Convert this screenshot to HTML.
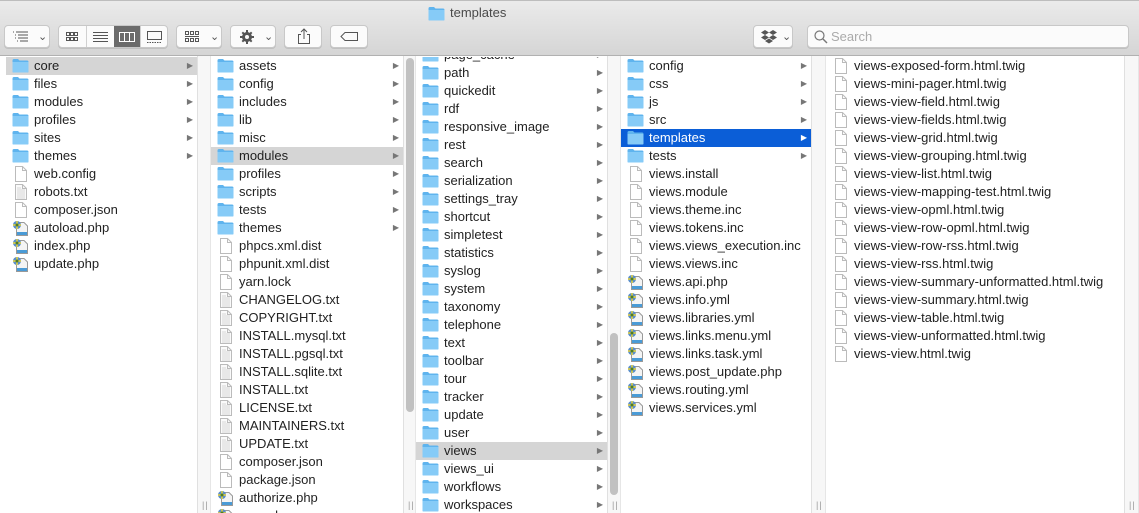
<!DOCTYPE html>
<html><head><meta charset="utf-8">
<style>
*{margin:0;padding:0;box-sizing:border-box}
body{width:1139px;height:513px;overflow:hidden;background:#fff;font-family:"Liberation Sans",Arial,sans-serif;font-size:13px;color:#222;position:relative}
#tb{position:absolute;left:0;top:0;width:1139px;height:56px;background:linear-gradient(#ebebeb,#d5d5d5);border-bottom:1px solid #b1b1b1}
#tb .topline{position:absolute;left:0;top:0;width:1139px;height:1px;background:#bdbdbd}
.title{position:absolute;left:430px;top:5px;font-size:13px;color:#4a4a4a}
.btn{position:absolute;top:25px;height:23px;background:#fbfbfb;border:1px solid #c8c8c8;border-radius:4px;box-shadow:0 1px 0 #c0c0c0}
.chev{position:absolute;top:4px;font-size:11px;color:#555}
.col{position:absolute;top:57px;bottom:0;overflow:hidden}
.row{position:absolute;left:0;right:0;height:18px;line-height:18px;white-space:nowrap}
.row svg{position:absolute;left:6px;top:1px}
.row span{position:absolute;left:28px;top:0}
.row i{position:absolute;right:4px;top:0;font-style:normal;font-size:8px;color:#777}
.sel{background:#d5d5d5}
.blue{background:#0b5ed7;color:#fff}
.blue i{color:#fff}
.strip{position:absolute;top:56px;bottom:0;background:#f7f7f7;border-left:1px solid #e0e0e0;border-right:1px solid #e6e6e6}
.grip{position:absolute;bottom:3px;left:4px;font-size:9px;color:#999;letter-spacing:1px}
.thumb{position:absolute;width:8px;background:#c1c1c1;border-radius:4px}
</style></head><body>
<svg width="0" height="0" style="position:absolute">
<defs>
<symbol id="fo" viewBox="0 0 17 15"><path d="M0.5 2.5 Q0.5 1 2 1 L6 1 L7.5 2.5 L15 2.5 Q16.5 2.5 16.5 4 L16.5 13.5 Q16.5 14.5 15.5 14.5 L1.5 14.5 Q0.5 14.5 0.5 13.5Z" fill="#5fb4ee"/><path d="M0.5 4 L16.5 4 L16.5 13.5 Q16.5 14.5 15.5 14.5 L1.5 14.5 Q0.5 14.5 0.5 13.5Z" fill="#86cbf7"/></symbol>
<symbol id="fi" viewBox="0 0 17 16"><path d="M3.5 0.5 L10.5 0.5 L14.5 4.5 L14.5 15.5 L3.5 15.5Z" fill="#fff" stroke="#bbb"/><path d="M10.5 0.5 L10.5 4.5 L14.5 4.5" fill="none" stroke="#bbb"/></symbol>
<symbol id="tx" viewBox="0 0 17 16"><path d="M3.5 0.5 L10.5 0.5 L14.5 4.5 L14.5 15.5 L3.5 15.5Z" fill="#fafafa" stroke="#bbb"/><path d="M10.5 0.5 L10.5 4.5 L14.5 4.5" fill="none" stroke="#bbb"/><path d="M5 4h4M5 6h8M5 8h8M5 10h8M5 12h8M5 14h8" stroke="#d5d5d5" stroke-width="1"/></symbol>
<symbol id="ph" viewBox="0 0 17 16"><path d="M4.5 2.5 L12 2.5 L15.5 6 L15.5 15.5 L4.5 15.5Z" fill="#f4f4f4" stroke="#999"/><rect x="5" y="12" width="10" height="3" fill="#4a9bd6"/><circle cx="5" cy="5" r="4" fill="#5a8ec9"/><path d="M5 1v8M1 5h8" stroke="#e8d23a" stroke-width="1.5"/><circle cx="5" cy="5" r="1.5" fill="#4a7a2a"/></symbol>
</defs></svg>

<div id="tb"><div class="topline"></div>
<div class="title"><svg width="17" height="15" style="position:absolute;left:-2px;top:1px"><use href="#fo"/></svg><span style="position:absolute;left:20px;top:0">templates</span></div>
<div class="btn" style="left:4px;width:46px"><svg width="20" height="14" style="position:absolute;left:8px;top:4px"><path d="M3 2h12M5 5h10M5 8h10M7 11h8" stroke="#555" stroke-width="1"/><path d="M0 2h1M2 5h1M2 8h1M4 11h1" stroke="#555"/></svg><span class="chev" style="left:33px">&#8964;</span></div>
<div class="btn" style="left:58px;width:110px;overflow:hidden">
<svg width="110" height="23" style="position:absolute;left:-1px;top:-1px">
<rect x="56" y="0" width="26" height="23" fill="#6b6b6b"/>
<path d="M28.5 0v23M82.5 0v23" stroke="#d0d0d0"/>
<g fill="none" stroke="#555"><rect x="8.5" y="7.5" width="3" height="3"/><rect x="12.5" y="7.5" width="3" height="3"/><rect x="16.5" y="7.5" width="3" height="3"/><rect x="8.5" y="12.5" width="3" height="3"/><rect x="12.5" y="12.5" width="3" height="3"/><rect x="16.5" y="12.5" width="3" height="3"/>
<path d="M35 7.5h15M35 10.5h15M35 13.5h15M35 16.5h15"/></g>
<g fill="none" stroke="#fff"><rect x="61.5" y="7.5" width="15" height="9"/><path d="M66.5 7.5v9M71.5 7.5v9"/></g>
<g fill="none" stroke="#555"><rect x="89.5" y="6.5" width="14" height="8"/><path d="M89 17.5h15" stroke-dasharray="1.5 1"/></g>
</svg></div>
<div class="btn" style="left:176px;width:46px"><svg width="20" height="14" style="position:absolute;left:8px;top:4px"><g fill="none" stroke="#555"><rect x="0.5" y="1.5" width="3" height="3"/><rect x="5.5" y="1.5" width="3" height="3"/><rect x="10.5" y="1.5" width="3" height="3"/><rect x="0.5" y="8.5" width="3" height="3"/><rect x="5.5" y="8.5" width="3" height="3"/><rect x="10.5" y="8.5" width="3" height="3"/><path d="M0 6.5h14"/></g></svg><span class="chev" style="left:33px">&#8964;</span></div>
<div class="btn" style="left:230px;width:46px"><svg width="16" height="16" style="position:absolute;left:8px;top:3px"><g fill="#555"><circle cx="8" cy="8" r="5"/><path d="M7 1h2v3H7zM7 12h2v3H7zM1 7h3v2H1zM12 7h3v2h-3zM2.6 4l1.4-1.4 2 2-1.4 1.4zM10 11.4l1.4-1.4 2 2-1.4 1.4zM2.6 12l2-2 1.4 1.4-2 2zM10 4.6l2-2 1.4 1.4-2 2z"/></g><circle cx="8" cy="8" r="2" fill="#fbfbfb"/></svg><span class="chev" style="left:33px">&#8964;</span></div>
<div class="btn" style="left:284px;width:38px"><svg width="14" height="17" style="position:absolute;left:12px;top:2px"><path d="M4 6.5H1.5v9h11v-9H10M7 11V1M4 4l3-3 3 3" fill="none" stroke="#555"/></svg></div>
<div class="btn" style="left:330px;width:38px"><svg width="20" height="12" style="position:absolute;left:9px;top:5px"><path d="M5 1.5h12.5v8H5L1 5.5z" fill="none" stroke="#555"/></svg></div>
<div class="btn" style="left:753px;width:40px"><svg width="16" height="14" style="position:absolute;left:7px;top:4px"><g fill="#555"><path d="M4 0l4 2.5-4 2.5-4-2.5zM12 0l4 2.5-4 2.5-4-2.5zM4 5l4 2.5-4 2.5-4-2.5zM12 5l4 2.5-4 2.5-4-2.5zM8 8.5l4 2.5-4 2.5-4-2.5z"/></g></svg><span class="chev" style="left:28px">&#8964;</span></div>
<div class="btn" style="left:807px;width:322px"><svg width="14" height="14" style="position:absolute;left:6px;top:4px"><circle cx="5.5" cy="5.5" r="4.5" fill="none" stroke="#777" stroke-width="1.2"/><path d="M9 9l4 4" stroke="#777" stroke-width="1.4"/></svg><span style="position:absolute;left:23px;top:3px;color:#aaa;font-size:13px">Search</span></div>
</div>

<div class="strip" style="left:197px;width:14px"><span class="grip">||</span></div>
<div class="strip" style="left:403px;width:13px"><div class="thumb" style="left:2px;top:2px;height:354px"></div><span class="grip">||</span></div>
<div class="strip" style="left:607px;width:14px"><div class="thumb" style="left:2px;top:277px;height:162px"></div><span class="grip">||</span></div>
<div class="strip" style="left:811px;width:15px"><span class="grip">||</span></div>
<div class="strip" style="left:1124px;width:15px"><span class="grip">||</span></div>

<div class="col" style="left:6px;width:191px">
<div class="row sel" style="top:0"><svg width="17" height="15"><use href="#fo"/></svg><span>core</span><i>▶</i></div>
<div class="row" style="top:18px"><svg width="17" height="15"><use href="#fo"/></svg><span>files</span><i>▶</i></div>
<div class="row" style="top:36px"><svg width="17" height="15"><use href="#fo"/></svg><span>modules</span><i>▶</i></div>
<div class="row" style="top:54px"><svg width="17" height="15"><use href="#fo"/></svg><span>profiles</span><i>▶</i></div>
<div class="row" style="top:72px"><svg width="17" height="15"><use href="#fo"/></svg><span>sites</span><i>▶</i></div>
<div class="row" style="top:90px"><svg width="17" height="15"><use href="#fo"/></svg><span>themes</span><i>▶</i></div>
<div class="row" style="top:108px"><svg width="17" height="16"><use href="#fi"/></svg><span>web.config</span></div>
<div class="row" style="top:126px"><svg width="17" height="16"><use href="#tx"/></svg><span>robots.txt</span></div>
<div class="row" style="top:144px"><svg width="17" height="16"><use href="#fi"/></svg><span>composer.json</span></div>
<div class="row" style="top:162px"><svg width="17" height="16"><use href="#ph"/></svg><span>autoload.php</span></div>
<div class="row" style="top:180px"><svg width="17" height="16"><use href="#ph"/></svg><span>index.php</span></div>
<div class="row" style="top:198px"><svg width="17" height="16"><use href="#ph"/></svg><span>update.php</span></div>
</div>

<div class="col" style="left:211px;width:192px">
<div class="row" style="top:0"><svg width="17" height="15"><use href="#fo"/></svg><span>assets</span><i>▶</i></div>
<div class="row" style="top:18px"><svg width="17" height="15"><use href="#fo"/></svg><span>config</span><i>▶</i></div>
<div class="row" style="top:36px"><svg width="17" height="15"><use href="#fo"/></svg><span>includes</span><i>▶</i></div>
<div class="row" style="top:54px"><svg width="17" height="15"><use href="#fo"/></svg><span>lib</span><i>▶</i></div>
<div class="row" style="top:72px"><svg width="17" height="15"><use href="#fo"/></svg><span>misc</span><i>▶</i></div>
<div class="row sel" style="top:90px"><svg width="17" height="15"><use href="#fo"/></svg><span>modules</span><i>▶</i></div>
<div class="row" style="top:108px"><svg width="17" height="15"><use href="#fo"/></svg><span>profiles</span><i>▶</i></div>
<div class="row" style="top:126px"><svg width="17" height="15"><use href="#fo"/></svg><span>scripts</span><i>▶</i></div>
<div class="row" style="top:144px"><svg width="17" height="15"><use href="#fo"/></svg><span>tests</span><i>▶</i></div>
<div class="row" style="top:162px"><svg width="17" height="15"><use href="#fo"/></svg><span>themes</span><i>▶</i></div>
<div class="row" style="top:180px"><svg width="17" height="16"><use href="#fi"/></svg><span>phpcs.xml.dist</span></div>
<div class="row" style="top:198px"><svg width="17" height="16"><use href="#fi"/></svg><span>phpunit.xml.dist</span></div>
<div class="row" style="top:216px"><svg width="17" height="16"><use href="#fi"/></svg><span>yarn.lock</span></div>
<div class="row" style="top:234px"><svg width="17" height="16"><use href="#tx"/></svg><span>CHANGELOG.txt</span></div>
<div class="row" style="top:252px"><svg width="17" height="16"><use href="#tx"/></svg><span>COPYRIGHT.txt</span></div>
<div class="row" style="top:270px"><svg width="17" height="16"><use href="#tx"/></svg><span>INSTALL.mysql.txt</span></div>
<div class="row" style="top:288px"><svg width="17" height="16"><use href="#tx"/></svg><span>INSTALL.pgsql.txt</span></div>
<div class="row" style="top:306px"><svg width="17" height="16"><use href="#tx"/></svg><span>INSTALL.sqlite.txt</span></div>
<div class="row" style="top:324px"><svg width="17" height="16"><use href="#tx"/></svg><span>INSTALL.txt</span></div>
<div class="row" style="top:342px"><svg width="17" height="16"><use href="#tx"/></svg><span>LICENSE.txt</span></div>
<div class="row" style="top:360px"><svg width="17" height="16"><use href="#tx"/></svg><span>MAINTAINERS.txt</span></div>
<div class="row" style="top:378px"><svg width="17" height="16"><use href="#tx"/></svg><span>UPDATE.txt</span></div>
<div class="row" style="top:396px"><svg width="17" height="16"><use href="#fi"/></svg><span>composer.json</span></div>
<div class="row" style="top:414px"><svg width="17" height="16"><use href="#fi"/></svg><span>package.json</span></div>
<div class="row" style="top:432px"><svg width="17" height="16"><use href="#ph"/></svg><span>authorize.php</span></div>
<div class="row" style="top:450px"><svg width="17" height="16"><use href="#ph"/></svg><span>cron.php</span></div>
</div>

<div class="col" style="left:416px;width:191px">
<div class="row" style="top:-11px"><svg width="17" height="15"><use href="#fo"/></svg><span>page_cache</span><i>▶</i></div>
<div class="row" style="top:7px"><svg width="17" height="15"><use href="#fo"/></svg><span>path</span><i>▶</i></div>
<div class="row" style="top:25px"><svg width="17" height="15"><use href="#fo"/></svg><span>quickedit</span><i>▶</i></div>
<div class="row" style="top:43px"><svg width="17" height="15"><use href="#fo"/></svg><span>rdf</span><i>▶</i></div>
<div class="row" style="top:61px"><svg width="17" height="15"><use href="#fo"/></svg><span>responsive_image</span><i>▶</i></div>
<div class="row" style="top:79px"><svg width="17" height="15"><use href="#fo"/></svg><span>rest</span><i>▶</i></div>
<div class="row" style="top:97px"><svg width="17" height="15"><use href="#fo"/></svg><span>search</span><i>▶</i></div>
<div class="row" style="top:115px"><svg width="17" height="15"><use href="#fo"/></svg><span>serialization</span><i>▶</i></div>
<div class="row" style="top:133px"><svg width="17" height="15"><use href="#fo"/></svg><span>settings_tray</span><i>▶</i></div>
<div class="row" style="top:151px"><svg width="17" height="15"><use href="#fo"/></svg><span>shortcut</span><i>▶</i></div>
<div class="row" style="top:169px"><svg width="17" height="15"><use href="#fo"/></svg><span>simpletest</span><i>▶</i></div>
<div class="row" style="top:187px"><svg width="17" height="15"><use href="#fo"/></svg><span>statistics</span><i>▶</i></div>
<div class="row" style="top:205px"><svg width="17" height="15"><use href="#fo"/></svg><span>syslog</span><i>▶</i></div>
<div class="row" style="top:223px"><svg width="17" height="15"><use href="#fo"/></svg><span>system</span><i>▶</i></div>
<div class="row" style="top:241px"><svg width="17" height="15"><use href="#fo"/></svg><span>taxonomy</span><i>▶</i></div>
<div class="row" style="top:259px"><svg width="17" height="15"><use href="#fo"/></svg><span>telephone</span><i>▶</i></div>
<div class="row" style="top:277px"><svg width="17" height="15"><use href="#fo"/></svg><span>text</span><i>▶</i></div>
<div class="row" style="top:295px"><svg width="17" height="15"><use href="#fo"/></svg><span>toolbar</span><i>▶</i></div>
<div class="row" style="top:313px"><svg width="17" height="15"><use href="#fo"/></svg><span>tour</span><i>▶</i></div>
<div class="row" style="top:331px"><svg width="17" height="15"><use href="#fo"/></svg><span>tracker</span><i>▶</i></div>
<div class="row" style="top:349px"><svg width="17" height="15"><use href="#fo"/></svg><span>update</span><i>▶</i></div>
<div class="row" style="top:367px"><svg width="17" height="15"><use href="#fo"/></svg><span>user</span><i>▶</i></div>
<div class="row sel" style="top:385px"><svg width="17" height="15"><use href="#fo"/></svg><span>views</span><i>▶</i></div>
<div class="row" style="top:403px"><svg width="17" height="15"><use href="#fo"/></svg><span>views_ui</span><i>▶</i></div>
<div class="row" style="top:421px"><svg width="17" height="15"><use href="#fo"/></svg><span>workflows</span><i>▶</i></div>
<div class="row" style="top:439px"><svg width="17" height="15"><use href="#fo"/></svg><span>workspaces</span><i>▶</i></div>
</div>

<div class="col" style="left:621px;width:190px">
<div class="row" style="top:0"><svg width="17" height="15"><use href="#fo"/></svg><span>config</span><i>▶</i></div>
<div class="row" style="top:18px"><svg width="17" height="15"><use href="#fo"/></svg><span>css</span><i>▶</i></div>
<div class="row" style="top:36px"><svg width="17" height="15"><use href="#fo"/></svg><span>js</span><i>▶</i></div>
<div class="row" style="top:54px"><svg width="17" height="15"><use href="#fo"/></svg><span>src</span><i>▶</i></div>
<div class="row blue" style="top:72px"><svg width="17" height="15"><use href="#fo"/></svg><span>templates</span><i>▶</i></div>
<div class="row" style="top:90px"><svg width="17" height="15"><use href="#fo"/></svg><span>tests</span><i>▶</i></div>
<div class="row" style="top:108px"><svg width="17" height="16"><use href="#fi"/></svg><span>views.install</span></div>
<div class="row" style="top:126px"><svg width="17" height="16"><use href="#fi"/></svg><span>views.module</span></div>
<div class="row" style="top:144px"><svg width="17" height="16"><use href="#fi"/></svg><span>views.theme.inc</span></div>
<div class="row" style="top:162px"><svg width="17" height="16"><use href="#fi"/></svg><span>views.tokens.inc</span></div>
<div class="row" style="top:180px"><svg width="17" height="16"><use href="#fi"/></svg><span>views.views_execution.inc</span></div>
<div class="row" style="top:198px"><svg width="17" height="16"><use href="#fi"/></svg><span>views.views.inc</span></div>
<div class="row" style="top:216px"><svg width="17" height="16"><use href="#ph"/></svg><span>views.api.php</span></div>
<div class="row" style="top:234px"><svg width="17" height="16"><use href="#ph"/></svg><span>views.info.yml</span></div>
<div class="row" style="top:252px"><svg width="17" height="16"><use href="#ph"/></svg><span>views.libraries.yml</span></div>
<div class="row" style="top:270px"><svg width="17" height="16"><use href="#ph"/></svg><span>views.links.menu.yml</span></div>
<div class="row" style="top:288px"><svg width="17" height="16"><use href="#ph"/></svg><span>views.links.task.yml</span></div>
<div class="row" style="top:306px"><svg width="17" height="16"><use href="#ph"/></svg><span>views.post_update.php</span></div>
<div class="row" style="top:324px"><svg width="17" height="16"><use href="#ph"/></svg><span>views.routing.yml</span></div>
<div class="row" style="top:342px"><svg width="17" height="16"><use href="#ph"/></svg><span>views.services.yml</span></div>
</div>

<div class="col" style="left:826px;width:298px">
<div class="row" style="top:0"><svg width="17" height="16"><use href="#fi"/></svg><span>views-exposed-form.html.twig</span></div>
<div class="row" style="top:18px"><svg width="17" height="16"><use href="#fi"/></svg><span>views-mini-pager.html.twig</span></div>
<div class="row" style="top:36px"><svg width="17" height="16"><use href="#fi"/></svg><span>views-view-field.html.twig</span></div>
<div class="row" style="top:54px"><svg width="17" height="16"><use href="#fi"/></svg><span>views-view-fields.html.twig</span></div>
<div class="row" style="top:72px"><svg width="17" height="16"><use href="#fi"/></svg><span>views-view-grid.html.twig</span></div>
<div class="row" style="top:90px"><svg width="17" height="16"><use href="#fi"/></svg><span>views-view-grouping.html.twig</span></div>
<div class="row" style="top:108px"><svg width="17" height="16"><use href="#fi"/></svg><span>views-view-list.html.twig</span></div>
<div class="row" style="top:126px"><svg width="17" height="16"><use href="#fi"/></svg><span>views-view-mapping-test.html.twig</span></div>
<div class="row" style="top:144px"><svg width="17" height="16"><use href="#fi"/></svg><span>views-view-opml.html.twig</span></div>
<div class="row" style="top:162px"><svg width="17" height="16"><use href="#fi"/></svg><span>views-view-row-opml.html.twig</span></div>
<div class="row" style="top:180px"><svg width="17" height="16"><use href="#fi"/></svg><span>views-view-row-rss.html.twig</span></div>
<div class="row" style="top:198px"><svg width="17" height="16"><use href="#fi"/></svg><span>views-view-rss.html.twig</span></div>
<div class="row" style="top:216px"><svg width="17" height="16"><use href="#fi"/></svg><span>views-view-summary-unformatted.html.twig</span></div>
<div class="row" style="top:234px"><svg width="17" height="16"><use href="#fi"/></svg><span>views-view-summary.html.twig</span></div>
<div class="row" style="top:252px"><svg width="17" height="16"><use href="#fi"/></svg><span>views-view-table.html.twig</span></div>
<div class="row" style="top:270px"><svg width="17" height="16"><use href="#fi"/></svg><span>views-view-unformatted.html.twig</span></div>
<div class="row" style="top:288px"><svg width="17" height="16"><use href="#fi"/></svg><span>views-view.html.twig</span></div>
</div>
</body></html>
